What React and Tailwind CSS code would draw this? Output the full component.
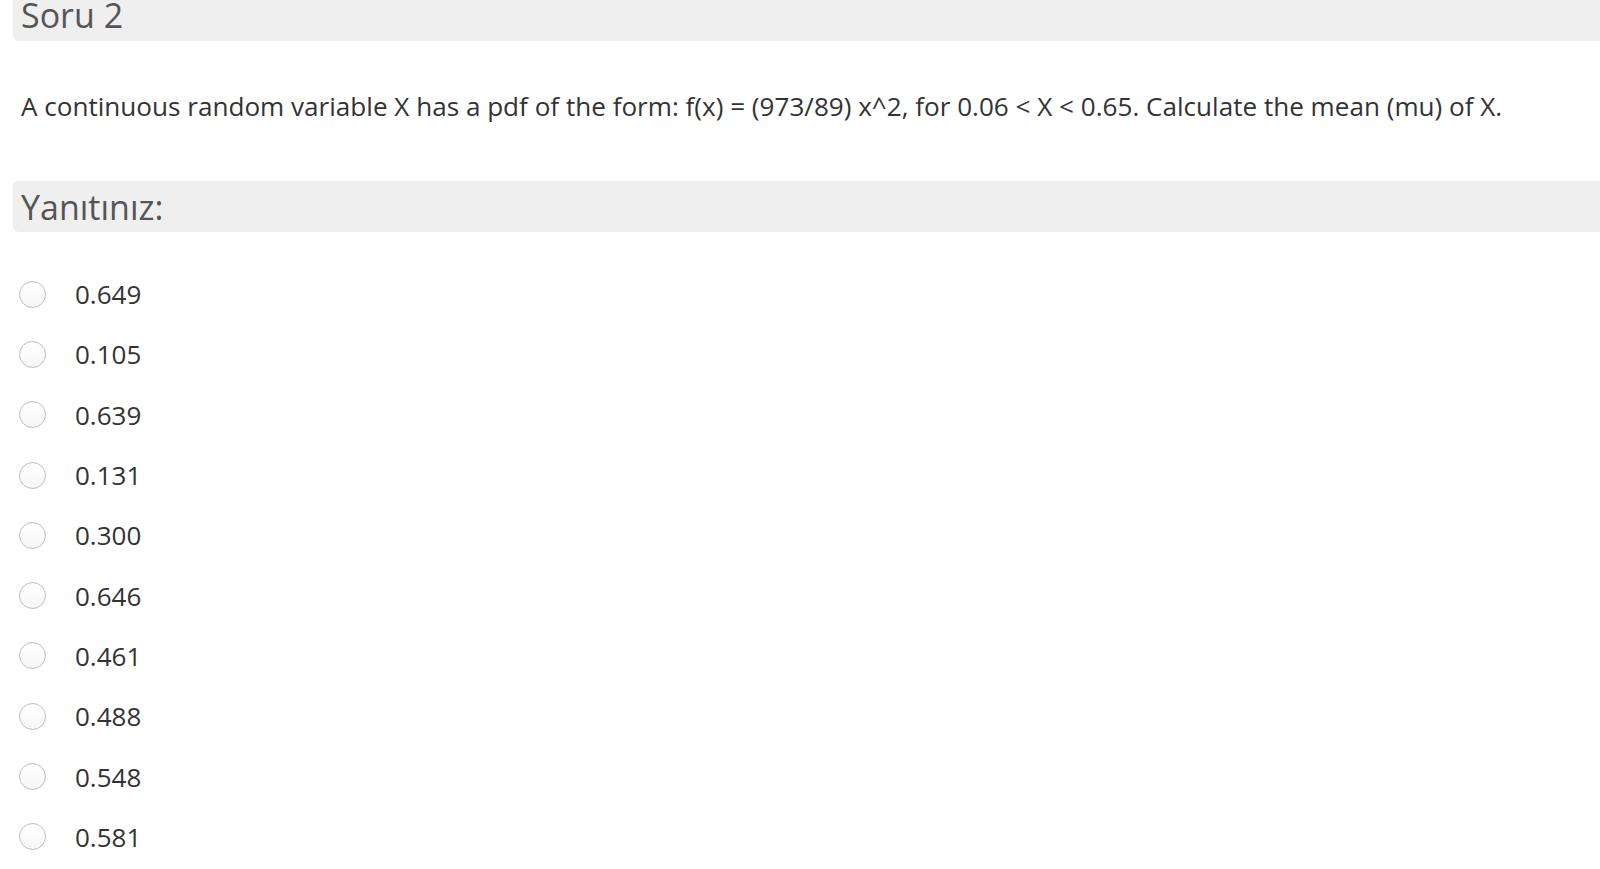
export default function App() {
  const options = ["0.649", "0.105", "0.639", "0.131", "0.300", "0.646", "0.461", "0.488", "0.548", "0.581"];

  return (
    <div
      className="w-[1600px] h-[869px] overflow-hidden bg-white text-[#333]"
      style={{ fontFamily: '"Open Sans", "Noto Sans", sans-serif' }}
    >
      <div className="ml-[13px] h-[41px] bg-[#efefef] rounded-bl-[6px] flex items-end px-[8px]">
        <span className="text-[34px] leading-[30px] pb-[11px] text-[#555]">Soru 2</span>
      </div>

      <p className="mt-[47px] px-[21px] text-[26.1px] leading-[36px]">
        A continuous random variable X has a pdf of the form: f(x) = (973/89) x^2, for 0.06 &lt; X &lt; 0.65. Calculate the mean (mu) of X.
      </p>

      <div className="mt-[57px] ml-[13px] h-[51px] bg-[#efefef] rounded-l-[6px] flex items-end px-[8px]">
        <span className="text-[34px] leading-[34px] pb-[8px] text-[#555]">Yanıtınız:</span>
      </div>

      <ul className="mt-[32px] flex flex-col">
        {options.map((o) => (
          <li key={o} className="h-[60.3px] flex items-center pl-[19px]">
            <span className="w-[27px] h-[27px] rounded-full border-[1.5px] border-[#bdbdbd] bg-gradient-to-b from-white to-[#f6f6f6]" />
            <span className="ml-[29px] text-[26px] leading-[32px]">{o}</span>
          </li>
        ))}
      </ul>
    </div>
  );
}
